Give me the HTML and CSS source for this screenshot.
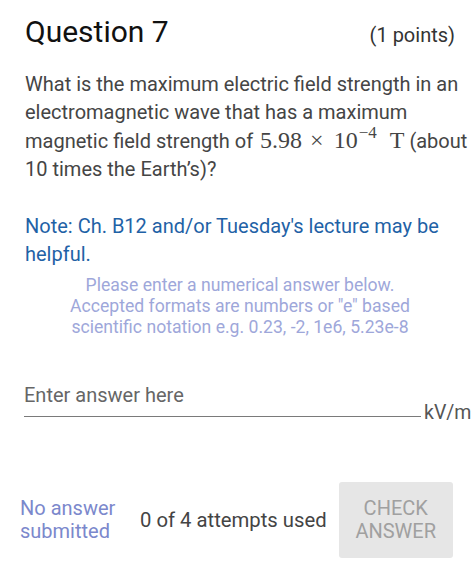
FILE: index.html
```html
<!DOCTYPE html>
<html lang="en">
<head>
    <meta charset="UTF-8">
    <meta name="viewport" content="width=device-width, initial-scale=1.0">
    <title>Question 7</title>
    <link rel="stylesheet" href="styles.css">
</head>
<body>
    <div class="question">
        <div class="question-header">
            <h1 class="question-title">Question 7</h1>
            <div class="question-points">(1 points)</div>
        </div>

        <p class="question-text">
            What is the maximum electric field strength in an electromagnetic wave that has a maximum magnetic field strength of
            <span class="math">5.98<span class="op">×</span>10<sup>−4</sup>T</span> (about 10 times the Earth’s)?
        </p>

        <p class="note">Note: Ch. B12 and/or Tuesday's lecture may be helpful.</p>

        <p class="hint">
            Please enter a numerical answer below.<br>
            Accepted formats are numbers or "e" based<br>
            scientific notation e.g. 0.23, -2, 1e6, 5.23e-8
        </p>

        <div class="answer-row">
            <div class="answer-field">Enter answer here</div>
            <div class="answer-unit">kV/m</div>
        </div>

        <div class="footer">
            <div class="status">No answer<br>submitted</div>
            <div class="attempts">0 of 4 attempts used</div>
            <button class="check-btn" disabled>CHECK<br>ANSWER</button>
        </div>
    </div>
</body>
</html>
```

FILE: styles.css
```css
body {
    margin: 0;
    background: #fff;
    font-family: Roboto, "Noto Sans", Arial, sans-serif;
}

.question {
    padding: 12px 3px 0 25px;
}

.question-header {
    display: flex;
    justify-content: space-between;
    align-items: baseline;
    margin-right: 16px;
}

.question-title {
    margin: 0;
    font-size: 30px;
    font-weight: 400;
    line-height: 40px;
    color: #111;
}

.question-points {
    font-size: 20px;
    color: #333;
}

.question-text {
    margin: 18px 0 0;
    font-size: 20px;
    line-height: 28px;
    color: #454545;
}

.math {
    margin-left: 2px;
    font-family: "Liberation Serif", "Times New Roman", serif;
    font-size: 24px;
    color: #444;
}

.math .op {
    margin: 0 10px 0 8px;
}

.math sup {
    font-size: 17px;
    line-height: 0;
    vertical-align: 10px;
    margin-left: 1px;
    margin-right: 13px;
}

.note {
    margin: 29px 0 0;
    font-size: 20px;
    line-height: 28px;
    color: #1f62a6;
}

.hint {
    margin: 7px 0 0;
    padding-right: 16px;
    text-align: center;
    font-size: 17.6px;
    line-height: 21px;
    color: #9ea7da;
}

.answer-row {
    display: flex;
    align-items: flex-end;
    margin: 46px -3px 0 -1px;
}

.answer-field {
    width: 397px;
    padding-bottom: 10px;
    border-bottom: 1.5px solid #7a7a7a;
    font-size: 20px;
    line-height: 22px;
    color: #666;
}

.answer-unit {
    margin-left: 3px;
    margin-bottom: -7px;
    font-size: 19.5px;
    color: #555;
}

.footer {
    display: flex;
    align-items: center;
    margin: 65px 0 0 -5px;
}

.status {
    width: 120px;
    font-size: 20px;
    line-height: 23px;
    color: #7b88cc;
}

.attempts {
    font-size: 20.3px;
    color: #444;
}

.check-btn {
    margin-left: 12px;
    width: 114px;
    height: 76px;
    border: none;
    border-radius: 3px;
    background: #e6e6e6;
    color: #a0a0a0;
    font-family: Roboto, "Noto Sans", Arial, sans-serif;
    font-size: 20px;
    line-height: 23px;
}
```
